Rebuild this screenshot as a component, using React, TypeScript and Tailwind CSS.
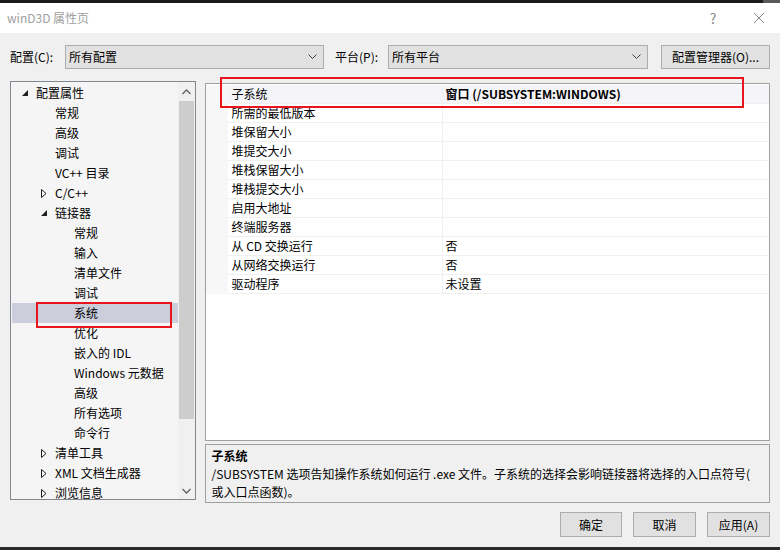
import React from "react";

const FONT = {
  fontFamily: '"Noto Sans CJK SC", "Noto Sans", sans-serif',
};

type TreeItem = {
  label: string;
  indent: number; // 0, 1, 2 levels
  toggle?: "open" | "closed";
  selected?: boolean;
};

const treeItems: TreeItem[] = [
  { label: "配置属性", indent: 0, toggle: "open" },
  { label: "常规", indent: 1 },
  { label: "高级", indent: 1 },
  { label: "调试", indent: 1 },
  { label: "VC++ 目录", indent: 1 },
  { label: "C/C++", indent: 1, toggle: "closed" },
  { label: "链接器", indent: 1, toggle: "open" },
  { label: "常规", indent: 2 },
  { label: "输入", indent: 2 },
  { label: "清单文件", indent: 2 },
  { label: "调试", indent: 2 },
  { label: "系统", indent: 2, selected: true },
  { label: "优化", indent: 2 },
  { label: "嵌入的 IDL", indent: 2 },
  { label: "Windows 元数据", indent: 2 },
  { label: "高级", indent: 2 },
  { label: "所有选项", indent: 2 },
  { label: "命令行", indent: 2 },
  { label: "清单工具", indent: 1, toggle: "closed" },
  { label: "XML 文档生成器", indent: 1, toggle: "closed" },
  { label: "浏览信息", indent: 1, toggle: "closed" },
];

const props: { name: string; value: string; bold?: boolean }[] = [
  { name: "子系统", value: "窗口 (/SUBSYSTEM:WINDOWS)", bold: true },
  { name: "所需的最低版本", value: "" },
  { name: "堆保留大小", value: "" },
  { name: "堆提交大小", value: "" },
  { name: "堆栈保留大小", value: "" },
  { name: "堆栈提交大小", value: "" },
  { name: "启用大地址", value: "" },
  { name: "终端服务器", value: "" },
  { name: "从 CD 交换运行", value: "否" },
  { name: "从网络交换运行", value: "否" },
  { name: "驱动程序", value: "未设置" },
];

function Toggle({ kind }: { kind: "open" | "closed" }) {
  if (kind === "open") {
    return (
      <svg width="6" height="6" viewBox="0 0 6 6">
        <path d="M6 0 L6 6 L0 6 Z" fill="#1e1e1e" />
      </svg>
    );
  }
  return (
    <svg width="6" height="9" viewBox="0 0 6 9">
      <path d="M0.5 0.5 L5 4.5 L0.5 8.5 Z" fill="none" stroke="#1e1e1e" strokeWidth="1" />
    </svg>
  );
}

function Chevron({ up = false }: { up?: boolean }) {
  return (
    <svg width="9" height="6" viewBox="0 0 9 6">
      <path
        d={up ? "M0.5 5 L4.5 1 L8.5 5" : "M0.5 1 L4.5 5 L8.5 1"}
        fill="none"
        stroke="#606060"
        strokeWidth="1.3"
      />
    </svg>
  );
}

function Combo({ text, width }: { text: string; width: string }) {
  return (
    <div
      className={`${width} h-[24px] bg-[#e1e1e1] border border-[#adadad] flex items-center pl-[3px] pr-[6px]`}
    >
      <span className="flex-1 text-[12px] leading-[22px] text-black">{text}</span>
      <svg width="9" height="6" viewBox="0 0 9 6">
        <path d="M0.5 0.5 L4.5 4.5 L8.5 0.5" fill="none" stroke="#404040" strokeWidth="1" />
      </svg>
    </div>
  );
}

function Button({ text, width }: { text: string; width: string }) {
  return (
    <div
      className={`${width} h-[25px] bg-[#e1e1e1] border border-[#adadad] flex items-center justify-center text-[12px] text-black`}
    >
      {text}
    </div>
  );
}

export default function App() {
  return (
    <div className="w-[780px] h-[550px] flex flex-col overflow-hidden bg-[#f0f0f0]" style={FONT}>
      {/* window frame edge */}
      <div className="h-[3px] flex shrink-0">
        <div className="flex-1 bg-[#1b1b1b]" />
        <div className="w-[17px] bg-[#5a5a5a]" />
      </div>

      {/* title bar */}
      <div className="h-[30px] bg-white flex items-center shrink-0">
        <span className="pl-[7px] text-[12px] text-[#a0a0a0] flex-1">winD3D 属性页</span>
        <span className="text-[14px] text-[#8a8a8a] w-[16px] text-center mr-[32px]">?</span>
        <svg width="12" height="12" viewBox="0 0 12 12" className="mr-[15px]">
          <path d="M1 1 L11 11 M11 1 L1 11" stroke="#8a8a8a" strokeWidth="1" />
        </svg>
      </div>

      {/* dialog body */}
      <div className="flex-1 flex flex-col px-[10px] pt-[12px]">
        {/* configuration / platform row */}
        <div className="flex items-center h-[24px] text-[12px] text-black">
          <span className="w-[55px]">配置(C):</span>
          <Combo text="所有配置" width="w-[259px]" />
          <span className="ml-[11px] w-[53px]">平台(P):</span>
          <Combo text="所有平台" width="w-[260px]" />
          <div className="ml-[13px] w-[109px] h-[24px] bg-[#e1e1e1] border border-[#adadad] flex items-center justify-center">
            配置管理器(O)...
          </div>
        </div>

        {/* main area */}
        <div className="flex mt-[12px] relative">
          {/* category tree */}
          <div className="w-[186px] h-[419px] border border-[#828790] bg-[#f5f5f5] flex relative">
            <div className="flex-1 flex flex-col pl-[1px] pt-[1px] overflow-hidden">
              {treeItems.map((it, i) => (
                <div
                  key={i}
                  className={`h-[20px] shrink-0 flex items-center text-[12px] text-black whitespace-nowrap ${
                    it.selected ? "bg-[#cccedb]" : ""
                  }`}
                >
                  <div
                    className={`flex items-center justify-center w-[10px] ${
                      it.indent === 0 ? "ml-[8px]" : it.indent === 1 ? "ml-[27px]" : "ml-[46px]"
                    }`}
                  >
                    {it.toggle ? <Toggle kind={it.toggle} /> : null}
                  </div>
                  <span className="ml-[6px]">{it.label}</span>
                </div>
              ))}
            </div>
            {/* vertical scrollbar */}
            <div className="w-[17px] bg-[#f0f0f0] flex flex-col items-center">
              <div className="h-[19px] w-full flex items-center justify-center">
                <Chevron up />
              </div>
              <div className="flex-1 w-full px-[1px] flex flex-col">
                <div className="h-[318px] bg-[#cdcdcd]" />
              </div>
              <div className="h-[17px] w-full flex items-center justify-center">
                <Chevron />
              </div>
            </div>
            {/* highlight around the selected node */}
            <div className="absolute left-[25px] top-[220px] w-[136px] h-[26px] border-2 border-[#e8141e]" />
          </div>

          {/* right column */}
          <div className="ml-[9px] w-[567px] flex flex-col">
            {/* property grid */}
            <div className="mt-[2px] h-[358px] border border-[#a0a0a0] bg-white flex flex-col pt-[1px]">
              {props.map((p, i) => (
                <div
                  key={i}
                  className={`h-[19px] flex text-[12px] text-black ${
                    i === 0 ? "bg-[#f5f5f9]" : ""
                  }`}
                >
                  <div className="w-[22px] bg-[#f7f7f7]" />
                  <div className="flex-1 flex items-center border-b border-[#f0f0f0]">
                    <div className="w-[215px] pl-[4px] h-full flex items-center border-r border-[#f0f0f0]">
                      {p.name}
                    </div>
                    <div className={`pl-[3px] ${p.bold ? "font-bold" : ""}`}>{p.value}</div>
                  </div>
                </div>
              ))}
            </div>

            {/* description */}
            <div className="mt-[3px] h-[59px] border border-[#a0a0a0] bg-[#f0f0f0] px-[6px] pt-[2px] text-[12px] leading-[18px] text-black">
              <div className="font-bold">子系统</div>
              <div>
                /SUBSYSTEM 选项告知操作系统如何运行 .exe 文件。子系统的选择会影响链接器将选择的入口点符号(
              </div>
              <div>或入口点函数)。</div>
            </div>

            {/* dialog buttons */}
            <div className="mt-[9px] flex justify-end gap-[11px]">
              <Button text="确定" width="w-[62px]" />
              <Button text="取消" width="w-[63px]" />
              <Button text="应用(A)" width="w-[63px]" />
            </div>
          </div>

          {/* highlight around the subsystem row */}
          <div className="absolute left-[210px] top-[-4px] w-[524px] h-[31px] border-2 border-[#e8141e]" />
        </div>
      </div>

      {/* window frame edge */}
      <div className="h-[3px] bg-[#2b2b2b] shrink-0" />
    </div>
  );
}
